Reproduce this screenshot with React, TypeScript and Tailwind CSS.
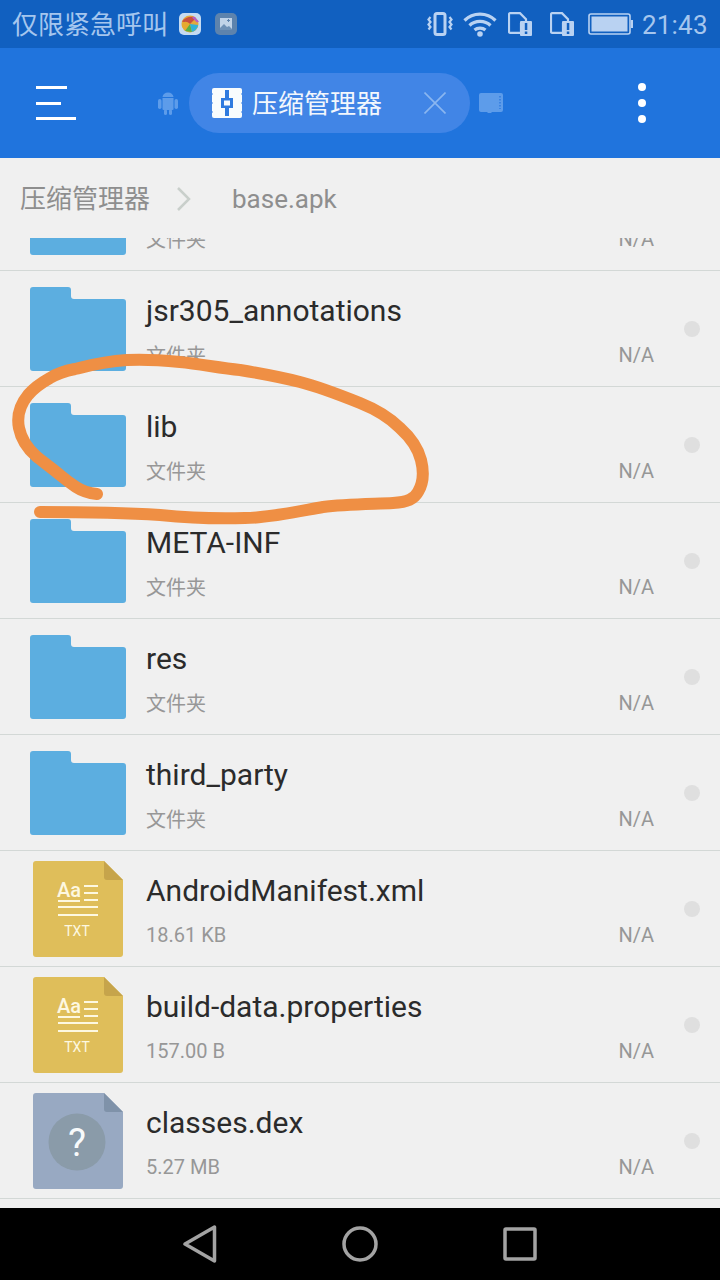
import * as React from "react";

type Entry = { name: string; sub: string; kind: "folder" | "txt" | "unknown" };

const ENTRIES: Entry[] = [
  { name: "", sub: "文件夹", kind: "folder" },
  { name: "jsr305_annotations", sub: "文件夹", kind: "folder" },
  { name: "lib", sub: "文件夹", kind: "folder" },
  { name: "META-INF", sub: "文件夹", kind: "folder" },
  { name: "res", sub: "文件夹", kind: "folder" },
  { name: "third_party", sub: "文件夹", kind: "folder" },
  { name: "AndroidManifest.xml", sub: "18.61 KB", kind: "txt" },
  { name: "build-data.properties", sub: "157.00 B", kind: "txt" },
  { name: "classes.dex", sub: "5.27 MB", kind: "unknown" },
];

function FolderIcon() {
  return (
    <svg width="96" height="84" viewBox="0 0 96 84" className="block">
      <path
        d="M3 0h35a3 3 0 0 1 3 3v6a3 3 0 0 0 3 3h49a3 3 0 0 1 3 3v66a3 3 0 0 1-3 3H3a3 3 0 0 1-3-3V3a3 3 0 0 1 3-3z"
        fill="#5caee0"
      />
    </svg>
  );
}

function TxtIcon() {
  return (
    <svg width="90" height="96" viewBox="0 0 90 96" className="block">
      <path d="M3 0h68l19 19v74a3 3 0 0 1-3 3H3a3 3 0 0 1-3-3V3a3 3 0 0 1 3-3z" fill="#dfbe5a" />
      <path d="M71 0l19 19H74a3 3 0 0 1-3-3z" fill="#c6a44b" />
      <text x="24" y="36" fontSize="20" fontWeight="500" fill="#fdf8e0" fontFamily="Roboto, sans-serif">
        Aa
      </text>
      <g stroke="#fdf8e0" strokeWidth="2">
        <path d="M51 25h14M51 32h14M51 39h14M25 40h22M25 46h40M25 54h40" />
      </g>
      <text x="44" y="75" fontSize="14" fill="#fdf8e0" textAnchor="middle" fontFamily="Roboto, sans-serif">
        TXT
      </text>
    </svg>
  );
}

function UnknownIcon() {
  return (
    <svg width="90" height="96" viewBox="0 0 90 96" className="block">
      <path d="M3 0h68l19 19v74a3 3 0 0 1-3 3H3a3 3 0 0 1-3-3V3a3 3 0 0 1 3-3z" fill="#98a9c2" />
      <path d="M71 0l19 19H74a3 3 0 0 1-3-3z" fill="#7f92a9" />
      <circle cx="44" cy="49" r="28.5" fill="#8a9ba9" />
      <text x="44" y="63" fontSize="38" fill="#f8fafb" textAnchor="middle" fontFamily="Roboto, sans-serif">
        ?
      </text>
    </svg>
  );
}

function Row({ entry }: { entry: Entry }) {
  const isFolder = entry.kind === "folder";
  return (
    <div className="flex h-[116px] shrink-0 border-b border-[#d3d8d6]">
      <div className="ml-[30px] flex w-[96px] shrink-0 items-center justify-center">
        {isFolder && <FolderIcon />}
        {entry.kind === "txt" && <TxtIcon />}
        {entry.kind === "unknown" && <UnknownIcon />}
      </div>
      <div className="ml-[20px] min-w-0 flex-1 pt-[23px]">
        <p className="h-[34px] text-[30px] leading-[34px] text-[#2b2b2b]">{entry.name}</p>
        <p className={isFolder ? "mt-[14px] text-[20px] leading-[28px] text-[#979797]" : "mt-[13px] text-[20px] leading-[28px] text-[#979797]"}>
          {entry.sub}
        </p>
      </div>
      <div className="mt-[70px] text-[20px] leading-[28px] text-[#979797]">N/A</div>
      <div className="ml-[30px] mr-[20px] flex w-[16px] items-center">
        <div className="h-[16px] w-[16px] rounded-full bg-[#dfdfdf]" />
      </div>
    </div>
  );
}

function SimIcon({ color, className }: { color: string; className?: string }) {
  return (
    <svg width="24" height="24" viewBox="0 0 24 24" className={className}>
      <path d="M2 1.200h10l6 6v5h-5v8.600H2a1 1 0 0 1-1-1V2.200a1 1 0 0 1 1-1z" fill="none" stroke={color} strokeWidth="2.200" />
      <rect x="12" y="9" width="12" height="15" rx="1" fill={color} />
      <rect x="16.800" y="11" width="2.500" height="7" fill="#1160c0" />
      <rect x="16.800" y="19.500" width="2.500" height="2.500" fill="#1160c0" />
    </svg>
  );
}

function StatusBar() {
  const c = "#b9d2f2";
  return (
    <div className="flex h-[48px] shrink-0 items-center bg-[#1160c0] pl-[12px] text-[26px] text-[#a5c6ee]">
      <span className="w-[155px] whitespace-nowrap pt-[2px] leading-[48px]">仅限紧急呼叫</span>
      <svg width="22" height="22" viewBox="0 0 22 22" className="ml-[12px]">
        <rect width="22" height="22" rx="5" fill="#c5dbf2" />
        <circle cx="11" cy="11" r="8.500" fill="#e3a93c" />
        <path d="M3 8.500C6 4 13 2.500 17 5L11 11z" fill="#c9503f" />
        <path d="M2.800 13C3 9 7 7 11 11L6 18z" fill="#e6a92f" />
        <path d="M6 18l5-7 2 8z" fill="#5cb043" />
        <path d="M13 19l-2-8 8 1c0 3-3 6-6 7z" fill="#2fb3d9" />
        <path d="M15 3.500l5 5-2 1-5-5z" fill="#b45cc9" />
      </svg>
      <svg width="22" height="22" viewBox="0 0 22 22" className="ml-[14px]">
        <rect width="22" height="22" rx="5" fill="#5d83ad" />
        <rect x="5" y="5" width="12" height="12" fill="#c0d3e8" />
        <path d="M5 15l4-4 3 3 2-1 3 3v1H5z" fill="#6d90b6" />
        <path d="M13.500 6v3M12 7.500h3" stroke="#5d83ad" strokeWidth="1" />
      </svg>

      <svg width="26" height="24" viewBox="0 0 26 24" className="ml-[190px]" fill="none" stroke={c}>
        <rect x="8" y="1.500" width="10" height="21" rx="2" strokeWidth="3" />
        <path d="M3.500 5l-2 2.500 2 2.500-2 2.500 2 2.500-2 2.500M22.500 5l2 2.500-2 2.500 2 2.500-2 2.500 2 2.500" strokeWidth="2.200" />
      </svg>
      <svg width="34" height="26" viewBox="0 0 34 26" className="ml-[10px]" fill="none" stroke={c} strokeWidth="3.200">
        <path d="M1.500 9.500C10 1 24 1 32.500 9.500" />
        <path d="M6.500 14.500C12 9 22 9 27.500 14.500" />
        <path d="M11.500 19C14.500 16.500 19.500 16.500 22.500 19" />
        <circle cx="17" cy="23" r="2.800" fill={c} stroke="none" />
      </svg>
      <SimIcon color={c} className="ml-[11px]" />
      <SimIcon color={c} className="ml-[18px]" />
      <svg width="45" height="22" viewBox="0 0 45 22" className="ml-[14px]">
        <rect x="1" y="1" width="41" height="20" rx="2" fill="none" stroke={c} strokeWidth="1.600" />
        <rect x="3.500" y="3.500" width="36" height="15" fill={c} />
        <rect x="43" y="7" width="2" height="8" fill={c} />
      </svg>
      <span className="ml-[9px] pt-[2px] leading-[48px] tracking-[0.2px]">21:43</span>
    </div>
  );
}

function Toolbar() {
  return (
    <div className="flex h-[110px] shrink-0 items-center bg-[#2074dd] pl-[36px]">
      <div className="flex h-[34px] w-[40px] flex-col justify-between">
        <div className="h-[3px] w-[31px] bg-white" />
        <div className="h-[3px] w-[25px] bg-white" />
        <div className="h-[3px] w-[40px] bg-white" />
      </div>
      <svg width="20" height="24" viewBox="0 0 20 24" className="ml-[82px]" fill="#5d9cea">
        <rect x="0" y="8" width="3.500" height="10" rx="1.700" />
        <rect x="16.500" y="8" width="3.500" height="10" rx="1.700" />
        <path d="M4.500 7h11v11a1 1 0 0 1-1 1h-9a1 1 0 0 1-1-1z" />
        <path d="M4.500 6C5 3 7 1.500 10 1.500S15 3 15.500 6z" />
        <rect x="6" y="18" width="3" height="6" rx="1.500" />
        <rect x="11" y="18" width="3" height="6" rx="1.500" />
      </svg>
      <div className="ml-[11px] flex h-[60px] w-[281px] items-center rounded-full bg-[#4185e6] pl-[23px]">
        <svg width="30" height="30" viewBox="0 0 30 30">
          <rect width="30" height="30" rx="2" fill="#f8fcfd" />
          <rect x="13" y="2" width="4" height="26" fill="#2f7bdf" />
          <rect x="9" y="10" width="12" height="10" fill="#2f7bdf" />
          <rect x="12" y="12.500" width="6" height="5" fill="#f8fcfd" />
          <path d="M0 6h1M0 15h1M0 24h1M29 6h1M29 15h1M29 24h1" stroke="#4185e6" strokeWidth="1" />
        </svg>
        <span className="ml-[10px] w-[130px] whitespace-nowrap pt-[2px] text-[26px] leading-[60px] text-[#f2f7fd]">
          压缩管理器
        </span>
        <svg width="22" height="22" viewBox="0 0 22 22" className="ml-[42px]" stroke="#8ab6f0" strokeWidth="1.600">
          <path d="M0.500 0.500l21 21M21.500 0.500l-21 21" />
        </svg>
      </div>
      <svg width="24" height="20" viewBox="0 0 24 20" className="ml-[9px]">
        <path d="M2 0h20a2 2 0 0 1 2 2v15a2 2 0 0 1-2 2H13l-1 1H9l-1-1H2a2 2 0 0 1-2-2V2a2 2 0 0 1 2-2z" fill="#5d9cea" />
        <path d="M21 3v13" stroke="#2f7bdf" strokeWidth="1.500" strokeDasharray="1.500 1.500" />
      </svg>
      <div className="ml-auto mr-[74px] flex h-[40px] w-[8px] flex-col justify-between">
        <div className="h-[8px] w-[8px] rounded-full bg-white" />
        <div className="h-[8px] w-[8px] rounded-full bg-white" />
        <div className="h-[8px] w-[8px] rounded-full bg-white" />
      </div>
    </div>
  );
}

function Breadcrumb() {
  return (
    <div className="flex h-[80px] shrink-0 items-center pl-[20px] pt-[2px] text-[26px] text-[#8e8e8e]">
      <span className="w-[130px] whitespace-nowrap">压缩管理器</span>
      <svg width="16" height="26" viewBox="0 0 16 26" className="ml-[26px]" fill="none" stroke="#c9cfcb" strokeWidth="2.500">
        <path d="M2 2l11 11L2 24" />
      </svg>
      <span className="ml-[40px]">base.apk</span>
    </div>
  );
}

function NavBar() {
  return (
    <div className="flex h-[72px] shrink-0 items-center bg-black pl-[183px]">
      <svg width="34" height="38" viewBox="0 0 34 38" fill="none" stroke="#a3a3a3" strokeWidth="3.500" strokeLinejoin="round">
        <path d="M31.500 2v34L2 19z" />
      </svg>
      <svg width="36" height="36" viewBox="0 0 36 36" fill="none" stroke="#a3a3a3" strokeWidth="3.500" className="ml-[125px]">
        <circle cx="18" cy="18" r="16" />
      </svg>
      <svg width="34" height="34" viewBox="0 0 34 34" fill="none" stroke="#a3a3a3" strokeWidth="3.500" strokeLinejoin="round" className="ml-[125px]">
        <rect x="2" y="2" width="30" height="30" rx="1" />
      </svg>
    </div>
  );
}

export default function App() {
  return (
    <div className="relative flex h-[1280px] w-[720px] flex-col overflow-hidden bg-[#f0f0f0] font-['Roboto','Noto_Sans_CJK_SC',sans-serif]">
      <StatusBar />
      <Toolbar />
      <Breadcrumb />
      <div className="min-h-0 flex-1 overflow-hidden">
        <div className="-mt-[83px]">
          {ENTRIES.map((entry, i) => (
            <Row key={i} entry={entry} />
          ))}
        </div>
      </div>
      <NavBar />
      {/* hand drawn circle on top of the screenshot */}
      <svg width="720" height="1280" viewBox="0 0 720 1280" className="pointer-events-none absolute left-0 top-0" fill="none">
        <path
          d="M97 494C88 493 82 491 76 487C70 483 66 480 60 475C52 468 43 462 36 456C27 448 21 438 19 428C17 418 19 406 28 395C34 388 41 383 50 378C58 373 65 371 75 369C88 366 100 362 127 360C145 359 160 360 180 362C200 364 220 368 240 370C258 373 280 377 300 382C320 387 340 395 360 403C375 409 390 418 400 428C410 437 418 448 421 460C424 472 424 482 418 492C414 499 408 502 393 503C375 504 345 504 323 507C305 510 270 518 245 518C215 519 190 518 160 515C130 513 90 512 40 512"
          stroke="#ef8f44"
          strokeWidth="12"
          strokeLinecap="round"
          strokeLinejoin="round"
        />
      </svg>
    </div>
  );
}
